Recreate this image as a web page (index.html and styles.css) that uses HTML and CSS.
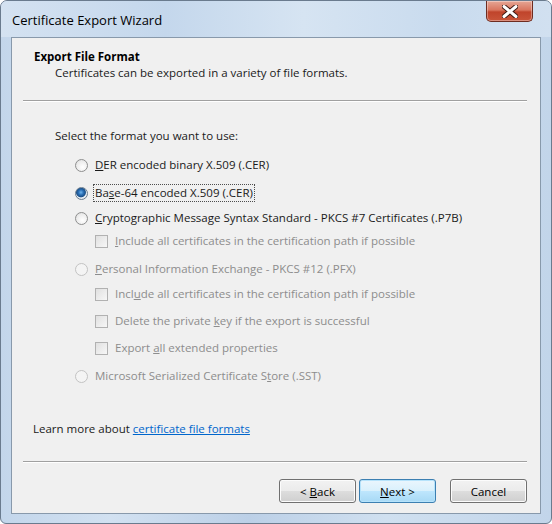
FILE: index.html
```html
<!DOCTYPE html>
<html lang="en">
<head>
    <meta charset="UTF-8">
    <title>Certificate Export Wizard</title>
    <link rel="stylesheet" href="styles.css">
</head>
<body>
<div class="window">
    <div class="titlebar">
        <span class="title">Certificate Export Wizard</span>
        <div class="close-btn">
            <svg width="16" height="13" viewBox="0 0 16 13">
                <path d="M2 1.5 L14 11.5 M14 1.5 L2 11.5" stroke="#3d1a14" stroke-width="5" stroke-linecap="round"/>
                <path d="M2 1.5 L14 11.5 M14 1.5 L2 11.5" stroke="#ffffff" stroke-width="3" stroke-linecap="round"/>
            </svg>
        </div>
    </div>
    <div class="panel">
        <div class="header">
            <div class="header-title">Export File Format</div>
            <div class="header-sub">Certificates can be exported in a variety of file formats.</div>
        </div>
        <div class="separator"></div>

        <div class="prompt">Select the format you want to use:</div>

        <div class="options">
            <div class="row">
                <span class="radio"></span>
                <span class="label"><u>D</u>ER encoded binary X.509 (.CER)</span>
            </div>
            <div class="row wide">
                <span class="radio checked"></span>
                <span class="label focus">Ba<u>s</u>e-64 encoded X.509 (.CER)</span>
            </div>
            <div class="row">
                <span class="radio"></span>
                <span class="label"><u>C</u>ryptographic Message Syntax Standard - PKCS #7 Certificates (.P7B)</span>
            </div>
            <div class="row sub tight disabled">
                <span class="checkbox"></span>
                <span class="label"><u>I</u>nclude all certificates in the certification path if possible</span>
            </div>
            <div class="row wide disabled">
                <span class="radio"></span>
                <span class="label"><u>P</u>ersonal Information Exchange - PKCS #12 (.PFX)</span>
            </div>
            <div class="row sub disabled">
                <span class="checkbox"></span>
                <span class="label">Incl<u>u</u>de all certificates in the certification path if possible</span>
            </div>
            <div class="row sub loose disabled">
                <span class="checkbox"></span>
                <span class="label">Delete the private <u>k</u>ey if the export is successful</span>
            </div>
            <div class="row sub loose disabled">
                <span class="checkbox"></span>
                <span class="label">Export <u>a</u>ll extended properties</span>
            </div>
            <div class="row wide disabled">
                <span class="radio"></span>
                <span class="label">Microsoft Serialized Certificate S<u>t</u>ore (.SST)</span>
            </div>
        </div>

        <div class="learn">Learn more about <a href="#" class="link">certificate file formats</a></div>

        <div class="separator bottom"></div>

        <div class="buttons">
            <button class="btn">&lt; <u>B</u>ack</button>
            <button class="btn default"><u>N</u>ext &gt;</button>
            <button class="btn cancel">Cancel</button>
        </div>
    </div>
</div>
</body>
</html>
```

FILE: styles.css
```css
body {
    margin: 0;
    width: 552px;
    height: 524px;
    background: #ffffff;
    font-family: "Open Sans", "Noto Sans", sans-serif;
    font-size: 11.5px;
    color: #1a1a1a;
}

.window {
    box-sizing: border-box;
    width: 552px;
    height: 524px;
    border: 1px solid #6a7b8e;
    border-radius: 7px 7px 6px 6px;
    background: linear-gradient(90deg, #c3d6eb 0%, #d2e1f1 20%, #bcd0e7 45%, #d0e0f0 70%, #c2d5ea 100%);
    overflow: hidden;
}

.titlebar {
    display: flex;
    align-items: flex-start;
    height: 36px;
    background: linear-gradient(90deg, #d4e2f1 0%, #c4d7ec 30%, #d6e4f2 55%, #c9dbee 80%, #d1e0f0 100%);
}

.title {
    margin: 10px 0 0 11px;
    font-size: 13px;
    color: #000000;
}

.close-btn {
    display: flex;
    align-items: center;
    justify-content: center;
    margin: 0 18px 0 auto;
    width: 45px;
    height: 20px;
    border: 1px solid #6e2c20;
    border-top: none;
    border-radius: 0 0 5px 5px;
    background: linear-gradient(180deg, #e6a695 0%, #d9765f 45%, #c0442b 55%, #c9553a 100%);
    box-shadow: inset 0 0 0 1px rgba(255, 255, 255, 0.35);
}

.panel {
    display: flex;
    flex-direction: column;
    margin: 0 10px 0 10px;
    height: 477px;
    box-sizing: border-box;
    border: 1px solid #8899ab;
    background: #f0f0f0;
}

.header {
    padding: 11px 0 0 22px;
}

.header-title {
    font-weight: bold;
    line-height: 16px;
    color: #000000;
}

.header-sub {
    padding-left: 21px;
    line-height: 16px;
}

.separator {
    margin: 19px 13px 0 11px;
    height: 1px;
    background: #a0a0a0;
    border-bottom: 1px solid #ffffff;
}

.separator.bottom {
    margin-top: 22px;
}

.prompt {
    margin: 24px 0 0 43px;
    line-height: 20px;
}

.options {
    display: flex;
    flex-direction: column;
    gap: 5px;
    margin: 9px 0 0 63px;
}

.row {
    display: flex;
    align-items: center;
    height: 20px;
}

.row.wide {
    margin-top: 3px;
}

.row.loose {
    margin-top: 2px;
}

.row.tight {
    margin-top: -2px;
}

.row.sub {
    padding-left: 20px;
}

.row.disabled {
    color: #8d8d8d;
}

.label {
    padding: 0 1px;
    line-height: 16px;
    border: 1px dotted transparent;
}

.label.focus {
    border-color: #4d4d4d;
}

.radio {
    box-sizing: border-box;
    width: 13px;
    height: 13px;
    margin-right: 5px;
    border: 1px solid #8e8f8f;
    border-radius: 50%;
    background: radial-gradient(circle at 60% 65%, #ffffff 0%, #ececec 60%, #d6d6d6 100%);
}

.radio.checked {
    border-color: #6b7d8f;
    background: radial-gradient(circle at 45% 40%, #6fb4ec 0%, #2a6fb6 28%, #1b4f86 50%, #e8eef4 60%, #dcdcdc 100%);
}

.disabled .radio {
    border-color: #c3c3c3;
    background: #f4f4f4;
}

.checkbox {
    box-sizing: border-box;
    width: 13px;
    height: 13px;
    margin-right: 5px;
    border: 1px solid #b1b1b1;
    background: linear-gradient(135deg, #e0e0e0 0%, #f7f7f7 100%);
}

.learn {
    margin: 33px 0 0 21px;
    line-height: 20px;
}

.link {
    color: #0066cc;
    text-decoration: underline;
}

.buttons {
    display: flex;
    justify-content: flex-end;
    gap: 3px;
    margin: 16px 13px 0 0;
}

.btn {
    box-sizing: border-box;
    width: 77px;
    height: 24px;
    padding: 0;
    border: 1px solid #707070;
    border-radius: 3px;
    background: linear-gradient(180deg, #f2f2f2 0%, #ebebeb 50%, #dddddd 51%, #cfcfcf 100%);
    box-shadow: inset 0 0 0 1px #fcfcfc;
    font-family: "Open Sans", "Noto Sans", sans-serif;
    font-size: 11.5px;
    color: #000000;
}

.btn.default {
    border-color: #3c7fb1;
    background: linear-gradient(180deg, #eaf6fd 0%, #d9f0fc 50%, #bee6fd 51%, #a7d9f5 100%);
    box-shadow: inset 0 0 0 1px #b6e3fb;
}

.btn.cancel {
    margin-left: 11px;
}
```
